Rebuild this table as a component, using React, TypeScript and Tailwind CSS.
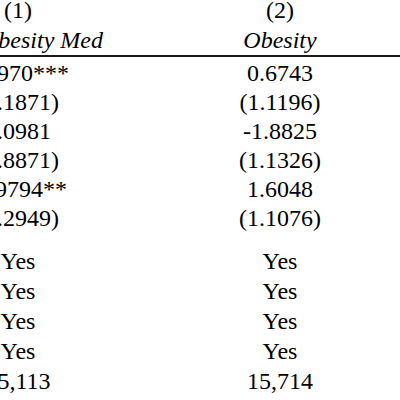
const header = [
  ["(1)", "(2)"],
  ["Anti-Obesity Med", "Obesity"],
];

const coefRows = [
  ["0.6970***", "0.6743"],
  ["(0.1871)", "(1.1196)"],
  ["0.0981", "-1.8825"],
  ["(0.8871)", "(1.1326)"],
  ["-0.9794**", "1.6048"],
  ["(0.2949)", "(1.1076)"],
];

const bottomRows = [
  ["Yes", "Yes"],
  ["Yes", "Yes"],
  ["Yes", "Yes"],
  ["Yes", "Yes"],
  ["15,113", "15,714"],
];

function Row({ cells, className }: { cells: string[]; className: string }) {
  return (
    <div className={"grid grid-cols-[262px_262px] " + className}>
      {cells.map((c, i) => (
        <div key={i} className="text-center whitespace-nowrap">
          {c}
        </div>
      ))}
    </div>
  );
}

export default function App() {
  return (
    <div className="[font-family:Liberation_Serif,Times_New_Roman,serif] w-[400px] h-[400px] overflow-hidden bg-white text-black">
      <div className="w-[524px] -ml-[113px] text-[24px]">
        <div className="-mt-[5px] border-b-2 border-[#1a1a1a]">
          <Row cells={header[0]} className="leading-[30px]" />
          <Row cells={header[1]} className="leading-[30px] italic" />
        </div>
        <div className="pt-[2px]">
          {coefRows.map((r, i) => (
            <Row key={i} cells={r} className="leading-[29px]" />
          ))}
        </div>
        <div className="mt-[13px]">
          {bottomRows.map((r, i) => (
            <Row key={i} cells={r} className="leading-[30px]" />
          ))}
        </div>
      </div>
    </div>
  );
}
